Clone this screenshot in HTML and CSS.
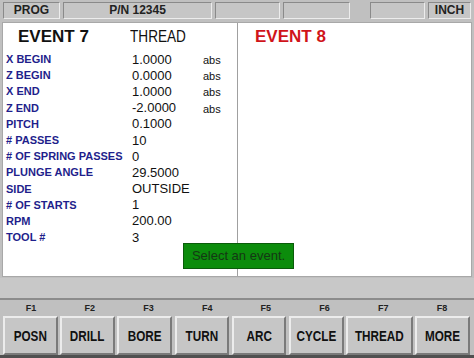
FILE: index.html
```html
<!DOCTYPE html>
<html lang="en">
<head>
    <meta charset="UTF-8">
    <title>Thread Event</title>
    <link rel="stylesheet" href="styles.css">
</head>
<body>
    <!-- status bar -->
    <div class="topbar">
        <div class="cell">PROG</div>
        <div class="cell">P/N 12345</div>
        <div class="cell"></div>
        <div class="cell"></div>
        <div class="spacer"></div>
        <div class="cell"></div>
        <div class="cell">INCH</div>
    </div>

    <!-- event panels -->
    <div class="panel">
        <div class="event-col">
            <div class="event-head">
                <span class="event-no">EVENT 7</span>
                <span class="event-type">THREAD</span>
            </div>
            <div class="fields">
                <span class="lbl">X BEGIN</span><span class="val">1.0000</span><span class="unit">abs</span>
                <span class="lbl">Z BEGIN</span><span class="val">0.0000</span><span class="unit">abs</span>
                <span class="lbl">X END</span><span class="val">1.0000</span><span class="unit">abs</span>
                <span class="lbl">Z END</span><span class="val">-2.0000</span><span class="unit">abs</span>
                <span class="lbl">PITCH</span><span class="val">0.1000</span><span class="unit"></span>
                <span class="lbl"># PASSES</span><span class="val">10</span><span class="unit"></span>
                <span class="lbl"># OF SPRING PASSES</span><span class="val">0</span><span class="unit"></span>
                <span class="lbl">PLUNGE ANGLE</span><span class="val">29.5000</span><span class="unit"></span>
                <span class="lbl">SIDE</span><span class="val">OUTSIDE</span><span class="unit"></span>
                <span class="lbl"># OF STARTS</span><span class="val">1</span><span class="unit"></span>
                <span class="lbl">RPM</span><span class="val">200.00</span><span class="unit"></span>
                <span class="lbl">TOOL #</span><span class="val">3</span><span class="unit"></span>
            </div>
        </div>
        <div class="event-col next">
            <div class="event-head">
                <span class="event-no red">EVENT 8</span>
            </div>
        </div>
        <div class="prompt">Select an event.</div>
    </div>

    <!-- soft keys -->
    <div class="band"></div>
    <div class="keys-labels">
        <span>F1</span><span>F2</span><span>F3</span><span>F4</span>
        <span>F5</span><span>F6</span><span>F7</span><span>F8</span>
    </div>
    <div class="keys">
        <button class="key"><span>POSN</span></button>
        <button class="key"><span>DRILL</span></button>
        <button class="key"><span>BORE</span></button>
        <button class="key"><span>TURN</span></button>
        <button class="key"><span>ARC</span></button>
        <button class="key"><span>CYCLE</span></button>
        <button class="key"><span>THREAD</span></button>
        <button class="key"><span>MORE</span></button>
    </div>
    <div class="foot"></div>
</body>
</html>
```

FILE: styles.css
```css
body {
    margin: 0;
    width: 474px;
    height: 358px;
    overflow: hidden;
    background-color: #c0c0c0;
    font-family: "Liberation Sans", Arial, sans-serif;
}
.topbar {
    display: grid;
    grid-template-columns: 57px 149px 65px 67px 14px 55px 43px;
    gap: 3px;
    height: 17px;
    padding: 2px 0 3px 3px;
}
.cell {
    background-color: #c6c6c6;
    border-top: 1px solid #8a8a8a;
    border-left: 1px solid #8a8a8a;
    border-bottom: 1px solid #ececec;
    border-right: 1px solid #ececec;
    font-size: 12px;
    font-weight: bold;
    line-height: 15px;
    text-align: center;
    color: #222;
}
.panel {
    position: relative;
    display: flex;
    height: 253px;
    margin: 0 2px;
    background-color: #fff;
    border: 1px solid #a8a8a8;
}
.event-col {
    width: 231px;
    padding: 3px 0 0 3px;
    border-right: 1px solid #a0a0a0;
}
.event-col.next {
    flex: 1;
    padding-left: 17px;
    border-right: none;
}
.event-head {
    display: flex;
    height: 22px;
    line-height: 22px;
    margin-bottom: 3px;
}
.event-no {
    width: 112px;
    padding-left: 12px;
    font-size: 17px;
    font-weight: bold;
    color: #111;
}
.event-no.red {
    padding-left: 0;
    color: #d0141a;
}
.event-type {
    display: inline-block;
    font-size: 17px;
    color: #111;
    transform: scaleX(0.8);
    transform-origin: left center;
}
.fields {
    display: grid;
    grid-template-columns: 126px 71px auto;
    grid-auto-rows: 16.2px;
    align-items: center;
}
.lbl {
    font-size: 11px;
    font-weight: bold;
    color: #1f1f8c;
}
.val {
    font-size: 13px;
    color: #111;
}
.unit {
    font-size: 11px;
    color: #111;
    padding-top: 2px;
}
.prompt {
    position: absolute;
    left: 180px;
    top: 220px;
    width: 109px;
    height: 24px;
    line-height: 24px;
    text-align: center;
    background-color: #0c8c0c;
    border: 1px solid #0a5c0a;
    font-size: 13px;
    color: #143814;
}
.band {
    height: 20px;
    margin-top: 1px;
    background-color: #c8c8c8;
    border-bottom: 2px solid #8c8c8c;
}
.keys-labels, .keys {
    display: grid;
    grid-template-columns: repeat(8, 1fr);
    gap: 2.5px;
    padding: 0 4px 0 3px;
}
.keys-labels {
    height: 16px;
    line-height: 16px;
    text-align: center;
    font-size: 9px;
    font-weight: bold;
    color: #222;
}
.keys {
    height: 39px;
}
.key {
    margin: 0;
    padding: 0;
    background-color: #c6c6c6;
    border-top: 2px solid #ececec;
    border-left: 2px solid #ececec;
    border-bottom: 2px solid #7a7a7a;
    border-right: 2px solid #7a7a7a;
    font-family: "Liberation Sans", Arial, sans-serif;
    font-size: 15px;
    font-weight: bold;
    color: #111;
}
.key span {
    display: inline-block;
    transform: scaleX(0.78);
}
.foot {
    height: 3px;
    background-color: #505050;
}
```
